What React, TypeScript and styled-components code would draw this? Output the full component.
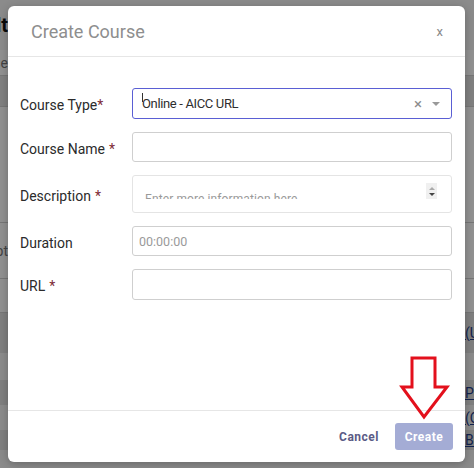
import React from 'react'
import styled, { createGlobalStyle } from 'styled-components'

const GlobalStyle = createGlobalStyle`
  html, body {
    margin: 0;
    padding: 0;
    width: 474px;
    height: 468px;
    overflow: hidden;
    font-family: Roboto, 'Liberation Sans', Arial, sans-serif;
  }
`

const rows: { h: number; shade: string; left?: string; right?: string; line?: boolean }[] = [
  { h: 50, shade: '#f4f4f4', left: 'Result' },
  { h: 25, shade: '#ffffff', left: 'Course', line: true },
  { h: 30, shade: '#e2e2e2', line: true },
  { h: 77, shade: '#ffffff' },
  { h: 38, shade: '#ffffff', line: true },
  { h: 55, shade: '#ffffff', left: 'Attempt', line: true },
  { h: 33, shade: '#ffffff', line: true },
  { h: 40, shade: '#e0e0e0', right: '(URL)' },
  { h: 27, shade: '#f4f4f4' },
  { h: 25, shade: '#e0e0e0', right: 'Policy' },
  { h: 25, shade: '#f4f4f4', right: '(Online)' },
  { h: 20, shade: '#e0e0e0', right: 'Basics' },
  { h: 23, shade: '#f4f4f4' },
]

const Page = styled.div`
  position: relative;
  width: 474px;
  height: 468px;
  overflow: hidden;
  background: #fff;
  display: flex;
  flex-direction: column;
`

const BgRow = styled.div<{ $h: number; $shade: string; $line?: boolean }>`
  flex: 0 0 ${(p) => p.$h}px;
  background: ${(p) => p.$shade};
  border-bottom: ${(p) => (p.$line ? '1px solid #d0d0d0' : 'none')};
  display: flex;
  align-items: center;
  justify-content: space-between;
  font-size: 14px;
  color: #333;
`

const LeftCut = styled.div<{ $bold?: boolean }>`
  width: 8px;
  overflow: hidden;
  display: flex;
  justify-content: flex-end;
  white-space: nowrap;
  font-weight: ${(p) => (p.$bold ? 700 : 400)};
  font-size: ${(p) => (p.$bold ? '20px' : '14px')};
  color: ${(p) => (p.$bold ? '#111' : '#777')};
`

const RightCut = styled.div`
  width: 9px;
  overflow: hidden;
  white-space: nowrap;
  color: #1f3d8a;
  text-decoration: underline;
  font-size: 14px;
`

const TableRow = styled.div`
  flex: 1;
  background: #ececec;
  display: grid;
  grid-template-columns: 73px 79px 1fr;
  font-size: 14px;
  color: #555;
  padding-top: 6px;
  & > div {
    border-left: 1px solid #bbb;
    padding-left: 5px;
    white-space: nowrap;
  }
  & > div:first-child {
    border-left: none;
  }
`

const LinkCell = styled.div`
  color: #1f3d8a;
`

const Dim = styled.div`
  position: absolute;
  inset: 0;
  background: rgba(0, 0, 0, 0.43);
`

const Modal = styled.div`
  position: absolute;
  left: 8px;
  top: 6px;
  width: 457px;
  height: 456px;
  background: #fff;
  border-radius: 6px;
  box-shadow: 0 2px 8px rgba(0, 0, 0, 0.25);
  display: flex;
  flex-direction: column;
`

const Header = styled.div`
  height: 50px;
  border-bottom: 1px solid #e6e6e6;
  display: flex;
  align-items: center;
  justify-content: space-between;
  padding: 0 22px 0 23px;
`

const Title = styled.div`
  font-size: 18px;
  color: #8e8e8e;
`

const Close = styled.div`
  font-size: 13px;
  color: #8a8a8a;
`

const Body = styled.div`
  flex: 1;
  padding: 31px 13px 0 12px;
  display: flex;
  flex-direction: column;
  gap: 13px;
`

const Row = styled.div`
  display: grid;
  grid-template-columns: 112px 1fr;
  align-items: center;
`

const Label = styled.div`
  font-size: 14px;
  color: #2b2b2b;
  padding-top: 3px;
`

const Star = styled.span<{ $gap?: boolean }>`
  color: #7d2b36;
  margin-left: ${(p) => (p.$gap ? '4px' : '0')};
`

const Field = styled.div<{ $h: number; $active?: boolean }>`
  height: ${(p) => p.$h}px;
  box-sizing: border-box;
  border: ${(p) => (p.$active ? '1.5px solid #5a5fd4' : '1px solid #cfcfcf')};
  border-radius: 3px;
  display: flex;
  align-items: center;
  padding: 0 ${(p) => (p.$active ? '9px' : '6px')};
  font-size: 13px;
  color: #333;
  position: relative;
`

const Caret = styled.span`
  position: absolute;
  left: 9px;
  top: 4px;
  width: 1px;
  height: 9px;
  background: #333;
`

const SelectText = styled.div`
  flex: 1;
  font-size: 13px;
  letter-spacing: -0.35px;
  color: #2e2e2e;
`

const Clear = styled.span`
  color: #8c8c8c;
  font-size: 15px;
  margin-right: 10px;
`

const DropArrow = styled.span`
  width: 0;
  height: 0;
  border-left: 4px solid transparent;
  border-right: 4px solid transparent;
  border-top: 4px solid #999;
  margin-right: 2px;
`

const Placeholder = styled.span`
  color: #9a9a9a;
  font-size: 12.5px;
`

const TextArea = styled.div`
  height: 38px;
  box-sizing: border-box;
  border: 1px solid #e4e4e4;
  border-radius: 3px;
  display: flex;
  align-items: flex-start;
  padding: 5px 14px 0 12px;
`

const AreaClip = styled.div`
  flex: 1;
  height: 18px;
  overflow: hidden;
`

const AreaText = styled.div`
  margin-top: 10px;
  color: #9a9a9a;
  font-size: 12px;
  line-height: 16px;
  letter-spacing: 0.1px;
`

const Spinner = styled.div`
  width: 11px;
  height: 16px;
  margin-top: 2px;
  background: #f0f0f0;
  display: flex;
  flex-direction: column;
  align-items: center;
  justify-content: center;
  gap: 3px;
`

const Tri = styled.span<{ $up?: boolean }>`
  width: 0;
  height: 0;
  border-left: 3px solid transparent;
  border-right: 3px solid transparent;
  ${(p) => (p.$up ? 'border-bottom: 3px solid #aaa;' : 'border-top: 3px solid #444;')}
`

const Footer = styled.div`
  height: 51px;
  border-top: 1px solid #e6e6e6;
  display: flex;
  align-items: center;
  justify-content: flex-end;
  padding: 0 12px 0 0;
  gap: 4px;
`

const Button = styled.button<{ $primary?: boolean }>`
  font-family: Roboto, 'Liberation Sans', Arial, sans-serif;
  font-size: 12px;
  font-weight: 700;
  letter-spacing: 0.5px;
  height: 27px;
  border: none;
  border-radius: 3px;
  padding: 0 ${(p) => (p.$primary ? '0' : '12px')};
  background: ${(p) => (p.$primary ? '#a4acd5' : 'transparent')};
  color: ${(p) => (p.$primary ? '#fff' : '#5b5b86')};
  width: ${(p) => (p.$primary ? '58px' : 'auto')};
`

const ArrowMark = styled.svg`
  position: absolute;
  left: 0;
  top: 0;
  pointer-events: none;
`

export default function App() {
  return (
    <>
      <GlobalStyle />
      <Page>
        {rows.map((r, i) => (
          <BgRow key={i} $h={r.h} $shade={r.shade} $line={r.line}>
            <LeftCut $bold={i === 0}>{r.left ?? ''}</LeftCut>
            <RightCut>{r.right ?? ''}</RightCut>
          </BgRow>
        ))}
        <TableRow>
          <div />
          <div>ASB-1.7</div>
          <LinkCell>Asbestos Hazard Awareness</LinkCell>
        </TableRow>
        <Dim />
        <Modal>
          <Header>
            <Title>Create Course</Title>
            <Close>x</Close>
          </Header>
          <Body>
            <Row>
              <Label>
                Course Type<Star>*</Star>
              </Label>
              <Field $h={31} $active>
                <Caret />
                <SelectText>Online - AICC URL</SelectText>
                <Clear>×</Clear>
                <DropArrow />
              </Field>
            </Row>
            <Row>
              <Label>
                Course Name<Star $gap>*</Star>
              </Label>
              <Field $h={30} />
            </Row>
            <Row>
              <Label>
                Description<Star $gap>*</Star>
              </Label>
              <TextArea>
                <AreaClip>
                  <AreaText>Enter more information here</AreaText>
                </AreaClip>
                <Spinner>
                  <Tri $up />
                  <Tri />
                </Spinner>
              </TextArea>
            </Row>
            <Row>
              <Label>Duration</Label>
              <Field $h={30}>
                <Placeholder>00:00:00</Placeholder>
              </Field>
            </Row>
            <Row>
              <Label>
                URL<Star $gap>*</Star>
              </Label>
              <Field $h={31} />
            </Row>
          </Body>
          <Footer>
            <Button>Cancel</Button>
            <Button $primary>Create</Button>
          </Footer>
        </Modal>
        <ArrowMark width="474" height="468" viewBox="0 0 474 468">
          <polygon
            points="412,358 435,358 435,387 447,387 424,417 402,387 412,387"
            fill="none"
            stroke="#e3101c"
            strokeWidth="3"
            strokeLinejoin="miter"
          />
        </ArrowMark>
      </Page>
    </>
  )
}
